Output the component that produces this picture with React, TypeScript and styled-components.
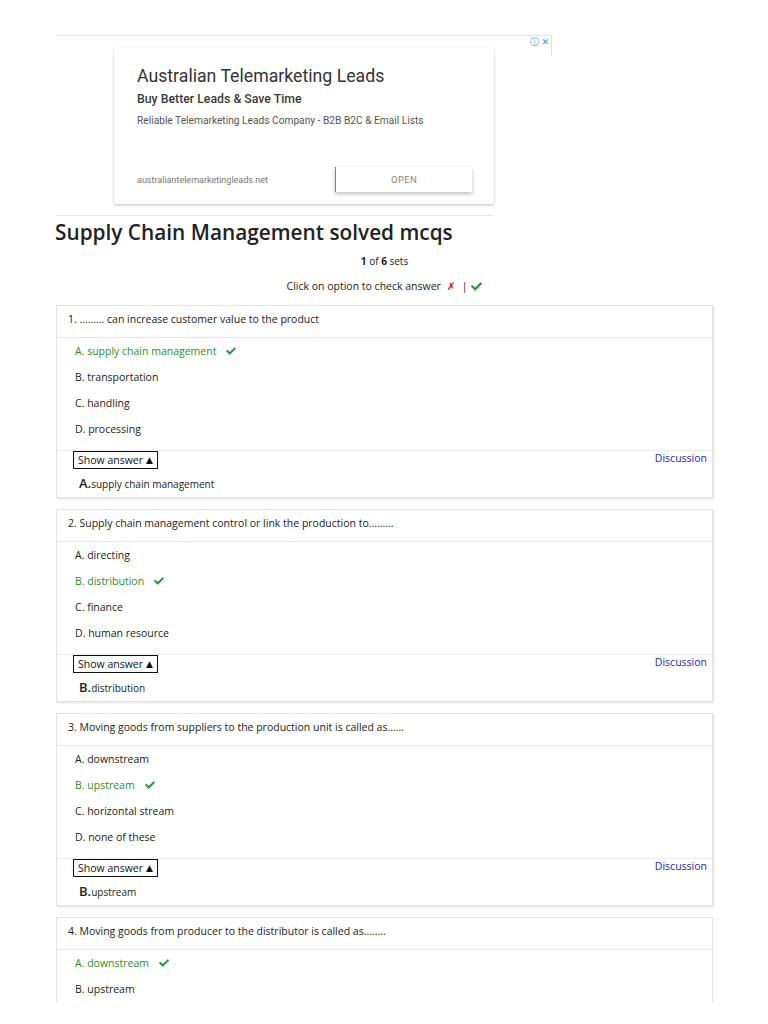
import React from "react";
import styled, { createGlobalStyle } from "styled-components";
import { FaCheck } from "react-icons/fa";

const Global = createGlobalStyle`
  html, body { margin: 0; padding: 0; background: #fff; }
  body { font-family: "Open Sans", "Noto Sans", sans-serif; color: #222; }
  * { box-sizing: border-box; }
`;

const Page = styled.div`
  padding: 35px 55px 0 56px;
`;

const AdFrame = styled.div`
  position: relative;
  width: 496px;
  border-top: 1px solid #e6e6e6;
  padding-top: 12px;
`;

const AdIcons = styled.div`
  position: absolute;
  right: 0;
  top: 0;
  height: 20px;
  border-right: 1px solid #e0e0e0;
  display: flex;
  align-items: flex-start;
  gap: 2px;
  padding: 0 2px 0 0;
  color: #2a9bd8;
  font-family: "DejaVu Sans", sans-serif;
  font-size: 9px;
  line-height: 12px;
`;

const AdCard = styled.div`
  width: 380px;
  height: 156px;
  margin-left: 58px;
  border-radius: 3px;
  box-shadow: 0 1px 3px rgba(0, 0, 0, 0.25);
  padding: 17px 22px 12px 23px;
  display: flex;
  flex-direction: column;
  font-family: Roboto, "Open Sans", sans-serif;
`;

const AdTitle = styled.div`
  font-size: 17.7px;
  color: #333;
  line-height: 22px;
`;

const AdSub = styled.div`
  margin-top: 4px;
  font-size: 12.3px;
  font-weight: 500;
  color: #3a3a3a;
  line-height: 16px;
`;

const AdDesc = styled.div`
  margin-top: 7px;
  font-size: 10.2px;
  color: #555;
  line-height: 14px;
`;

const AdBottom = styled.div`
  margin-top: auto;
  display: flex;
  align-items: center;
  justify-content: space-between;
`;

const AdUrl = styled.div`
  font-size: 9px;
  color: #777;
`;

const OpenBtn = styled.div`
  width: 137px;
  height: 25px;
  border-left: 1px solid #4a90e2;
  box-shadow: 0 2px 4px rgba(0, 0, 0, 0.25);
  display: flex;
  align-items: center;
  justify-content: center;
  font-size: 9.5px;
  color: #888;
  letter-spacing: 0.3px;
`;

const AdRule = styled.div`
  width: 437px;
  border-top: 1px solid #e6e6e6;
  margin-top: 11px;
`;

const Title = styled.h1`
  margin: 1px 0 0 -1px;
  font-size: 20.8px;
  font-weight: 600;
  color: #222;
  line-height: 30px;
`;

const SetLine = styled.div`
  text-align: center;
  font-size: 10px;
  line-height: 14px;
  margin-top: 7px;
  b { font-weight: 700; }
`;

const Hint = styled.div`
  display: flex;
  justify-content: center;
  align-items: center;
  font-size: 10.5px;
  line-height: 14px;
  margin-top: 11px;
`;

const Cross = styled.span`
  color: #e01010;
  font-family: "DejaVu Sans", sans-serif;
  margin: 0 6px 0 6px;
`;

const TickIcon = styled(FaCheck)<{ $gap?: number }>`
  color: #1f9a2e;
  margin-left: ${(p) => p.$gap ?? 0}px;
`;

const CardList = styled.div`
  margin-top: 12px;
  display: flex;
  flex-direction: column;
  gap: 11px;
`;

const Card = styled.div<{ $partial?: boolean }>`
  border: 1px solid #e4e4e4;
  border-bottom: ${(p) => (p.$partial ? "none" : "1px solid #e4e4e4")};
  box-shadow: ${(p) => (p.$partial ? "none" : "1px 1px 2px rgba(0, 0, 0, 0.12)")};
`;

const Question = styled.div`
  height: 32px;
  padding: 6px 0 0 11px;
  font-size: 10.5px;
  line-height: 14px;
  border-bottom: 1px solid #e8e8e8;
`;

const Options = styled.div<{ $partial?: boolean }>`
  padding-bottom: ${(p) => (p.$partial ? 0 : 8)}px;
  border-bottom: ${(p) => (p.$partial ? "none" : "1px solid #efefef")};
`;

const Option = styled.div<{ $correct?: boolean }>`
  height: 26px;
  display: flex;
  align-items: center;
  gap: 8px;
  padding-left: 18px;
  font-size: 10.5px;
  color: ${(p) => (p.$correct ? "#1f8f1f" : "#222")};
`;

const Footer = styled.div`
  display: flex;
  justify-content: space-between;
  align-items: flex-start;
  padding: 0 5px 0 16px;
`;

const ShowBtn = styled.div`
  height: 18px;
  padding: 0 4px;
  border: 1px solid #111;
  display: flex;
  align-items: center;
  font-size: 10.5px;
  color: #111;
  gap: 3px;
`;

const Tri = styled.span`
  font-family: "DejaVu Sans", sans-serif;
  font-size: 9px;
`;

const Discussion = styled.a`
  font-size: 10.5px;
  color: #2323c8;
  text-decoration: none;
  line-height: 14px;
`;

const Answer = styled.div`
  padding: 6px 0 5px 22px;
  font-size: 10px;
  line-height: 16px;
  b { font-size: 13px; font-weight: 600; }
`;

type Q = { q: string; opts: string[]; correct: number; partial?: boolean };

const questions: Q[] = [
  {
    q: "1. ......... can increase customer value to the product",
    opts: ["supply chain management", "transportation", "handling", "processing"],
    correct: 0,
  },
  {
    q: "2. Supply chain management control or link the production to.........",
    opts: ["directing", "distribution", "finance", "human resource"],
    correct: 1,
  },
  {
    q: "3. Moving goods from suppliers to the production unit is called as......",
    opts: ["downstream", "upstream", "horizontal stream", "none of these"],
    correct: 1,
  },
  {
    q: "4. Moving goods from producer to the distributor is called as........",
    opts: ["downstream", "upstream"],
    correct: 0,
    partial: true,
  },
];

const letters = ["A", "B", "C", "D"];

export default function App() {
  return (
    <>
      <Global />
      <Page>
        <AdFrame>
          <AdIcons>
            <span>ⓘ</span>
            <span>✕</span>
          </AdIcons>
          <AdCard>
            <AdTitle>Australian Telemarketing Leads</AdTitle>
            <AdSub>Buy Better Leads &amp; Save Time</AdSub>
            <AdDesc>Reliable Telemarketing Leads Company - B2B B2C &amp; Email Lists</AdDesc>
            <AdBottom>
              <AdUrl>australiantelemarketingleads.net</AdUrl>
              <OpenBtn>OPEN</OpenBtn>
            </AdBottom>
          </AdCard>
          <AdRule />
        </AdFrame>
        <Title>Supply Chain Management solved mcqs</Title>
        <SetLine>
          <b>1</b> of <b>6</b> sets
        </SetLine>
        <Hint>
          Click on option to check answer<Cross>✗</Cross>|<TickIcon size={11} $gap={4} />
        </Hint>
        <CardList>
          {questions.map((item, i) => (
            <Card key={i} $partial={item.partial}>
              <Question>{item.q}</Question>
              <Options $partial={item.partial}>
                {item.opts.map((o, j) => (
                  <Option key={j} $correct={j === item.correct}>
                    <span>
                      {letters[j]}. {o}
                    </span>
                    {j === item.correct && <TickIcon size={10} $gap={2} />}
                  </Option>
                ))}
              </Options>
              {!item.partial && (
                <>
                  <Footer>
                    <ShowBtn>
                      Show answer <Tri>▲</Tri>
                    </ShowBtn>
                    <Discussion href="#">Discussion</Discussion>
                  </Footer>
                  <Answer>
                    <b>{letters[item.correct]}.</b>
                    {item.opts[item.correct]}
                  </Answer>
                </>
              )}
            </Card>
          ))}
        </CardList>
      </Page>
    </>
  );
}
